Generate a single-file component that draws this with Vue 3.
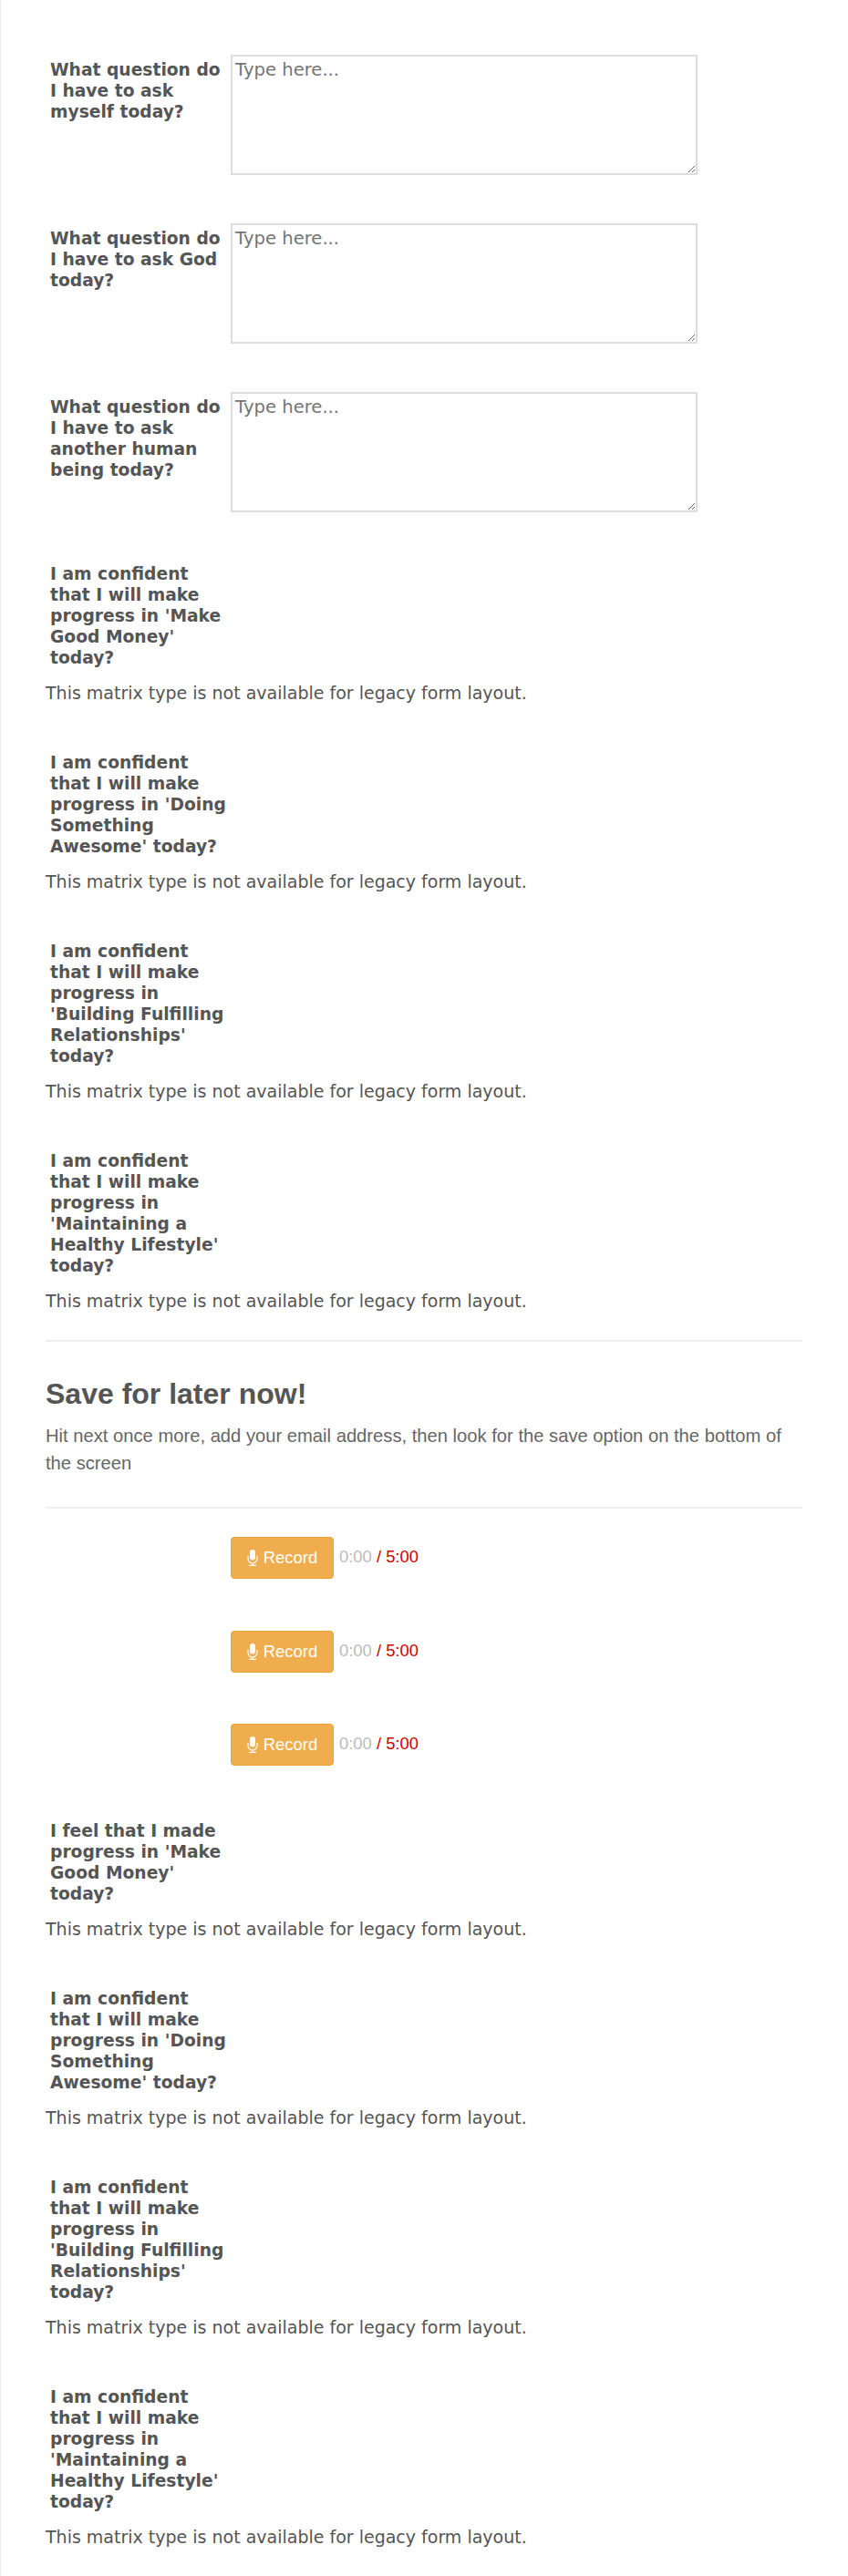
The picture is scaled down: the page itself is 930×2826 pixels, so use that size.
<script setup>
const questions = [
  'What question do I have to ask myself today?',
  'What question do I have to ask God today?',
  'What question do I have to ask another human being today?'
];

const firstMatrix = [
  "I am confident that I will make progress in 'Make Good Money' today?",
  "I am confident that I will make progress in 'Doing Something Awesome' today?",
  "I am confident that I will make progress in 'Building Fulfilling Relationships' today?",
  "I am confident that I will make progress in 'Maintaining a Healthy Lifestyle' today?"
];

const secondMatrix = [
  "I feel that I made progress in 'Make Good Money' today?",
  "I am confident that I will make progress in 'Doing Something Awesome' today?",
  "I am confident that I will make progress in 'Building Fulfilling Relationships' today?",
  "I am confident that I will make progress in 'Maintaining a Healthy Lifestyle' today?"
];

const recorders = [1, 2, 3];
</script>

<template>
  <div class="page">
    <div class="form-wrap">
      <div v-for="q in questions" :key="q" class="question-row">
        <label class="question-label">{{ q }}</label>
        <textarea class="answer" placeholder="Type here..."></textarea>
      </div>

      <div class="matrix-group first">
        <div v-for="m in firstMatrix" :key="m" class="matrix">
          <label class="question-label">{{ m }}</label>
          <p class="matrix-note">This matrix type is not available for legacy form layout.</p>
        </div>
      </div>

      <div class="save-box">
        <h2>Save for later now!</h2>
        <p>Hit next once more, add your email address, then look for the save option on the bottom of the screen</p>
      </div>

      <div class="recorders">
        <div v-for="r in recorders" :key="r" class="recorder">
          <button class="record-btn" type="button">
            <svg class="mic" viewBox="0 0 12 18" width="12" height="18" aria-hidden="true">
              <rect x="3" y="0" width="6" height="11.5" rx="3" fill="#fff" />
              <path d="M1 7v3a5 5 0 0 0 10 0V7" fill="none" stroke="#fff" stroke-width="1.2" />
              <path d="M6 15v2.2M2 17.4h8" fill="none" stroke="#fff" stroke-width="1.2" />
            </svg>
            Record
          </button>
          <span class="time"><span class="elapsed">0:00</span> <span class="limit">/ 5:00</span></span>
        </div>
      </div>

      <div class="matrix-group">
        <div v-for="m in secondMatrix" :key="'b' + m" class="matrix">
          <label class="question-label">{{ m }}</label>
          <p class="matrix-note">This matrix type is not available for legacy form layout.</p>
        </div>
      </div>
    </div>
  </div>
</template>

<style>
html, body { margin: 0; padding: 0; background: #fff; }
</style>

<style scoped>
.page { width: 930px; height: 2826px; box-sizing: border-box; border-left: 1px solid #eee; overflow: hidden; }
.form-wrap { width: 830px; margin-left: 49px; padding-top: 60px; font-family: "DejaVu Sans", sans-serif; color: #555; }

.question-row { display: flex; height: 185px; }
.question-label { display: block; width: 196px; margin-left: 5px; font-size: 18.7px; line-height: 23px; font-weight: 700; color: #555; }
.question-row .question-label { margin-right: 2px; padding-top: 5px; }
.answer { width: 512px; height: 132px; box-sizing: border-box; border: 2px solid #ddd; padding: 3px; font-family: "DejaVu Sans", sans-serif; font-size: 19.6px; color: #555; margin: 0; }

.matrix-group { display: flex; flex-direction: column; gap: 53px; padding: 3px 0 0; }
.matrix-group.first { padding-bottom: 31px; }
.matrix-note { margin: 15px 0 0; font-size: 19px; line-height: 24px; color: #555; }

.save-box { height: 185px; box-sizing: border-box; border-top: 2px solid #eee; border-bottom: 2px solid #eee; font-family: "Liberation Sans", sans-serif; }
.save-box h2 { margin: 37px 0 0; font-size: 32px; line-height: 40px; font-weight: 700; color: #555; }
.save-box p { margin: 11px 0 0; font-size: 20.2px; line-height: 30px; color: #666; }

.recorders { padding: 31px 0 0 203px; font-family: "Liberation Sans", sans-serif; }
.recorder { display: flex; align-items: flex-start; height: 102.5px; }
.record-btn { display: flex; align-items: center; justify-content: center; gap: 6px; width: 113px; height: 46px; padding: 0; background: #f0ad4e; border: 1px solid #eea236; border-radius: 4px; color: #fff; font-family: "Liberation Sans", sans-serif; font-size: 18.4px; }
.time { margin-left: 6px; font-size: 18.4px; line-height: 43px; }
.elapsed { color: #bbb; }
.limit { color: #c00; }
</style>
